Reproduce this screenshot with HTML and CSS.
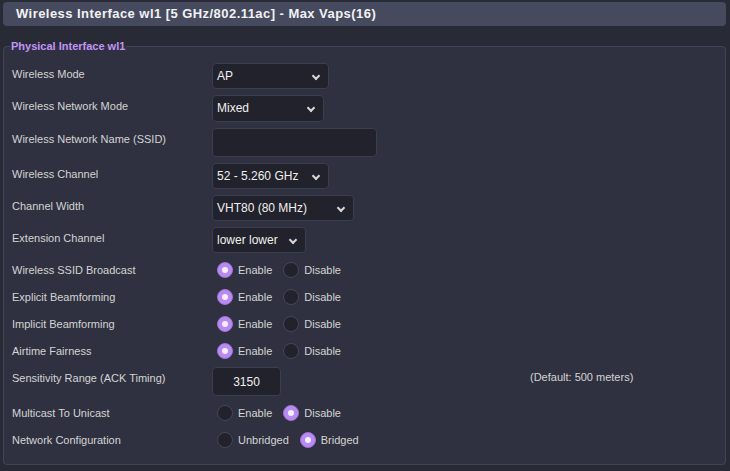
FILE: index.html
```html
<!DOCTYPE html>
<html>
<head>
<meta charset="utf-8">
<link rel="stylesheet" href="styles.css">
</head>
<body>
<div class="page">
  <h2 class="title">Wireless Interface wl1 [5 GHz/802.11ac] - Max Vaps(16)</h2>
  <fieldset class="panel">
    <legend class="legend">Physical Interface wl1</legend>

    <div class="row">
      <div class="label">Wireless Mode</div>
      <div class="select w-117">AP<span class="chev"></span></div>
    </div>
    <div class="row">
      <div class="label">Wireless Network Mode</div>
      <div class="select w-112 h27">Mixed<span class="chev"></span></div>
    </div>
    <div class="row">
      <div class="label">Wireless Network Name (SSID)</div>
      <div class="textbox w-165"></div>
    </div>
    <div class="row">
      <div class="label">Wireless Channel</div>
      <div class="select w-117">52 - 5.260 GHz<span class="chev"></span></div>
    </div>
    <div class="row">
      <div class="label">Channel Width</div>
      <div class="select w-142">VHT80 (80 MHz)<span class="chev"></span></div>
    </div>
    <div class="row">
      <div class="label">Extension Channel</div>
      <div class="select w-94">lower lower<span class="chev"></span></div>
    </div>

    <div class="row radio-row">
      <div class="label">Wireless SSID Broadcast</div>
      <div class="radios">
        <span class="radio on"></span><span class="rtext">Enable</span>
        <span class="radio"></span><span class="rtext">Disable</span>
      </div>
    </div>
    <div class="row radio-row">
      <div class="label">Explicit Beamforming</div>
      <div class="radios">
        <span class="radio on"></span><span class="rtext">Enable</span>
        <span class="radio"></span><span class="rtext">Disable</span>
      </div>
    </div>
    <div class="row radio-row">
      <div class="label">Implicit Beamforming</div>
      <div class="radios">
        <span class="radio on"></span><span class="rtext">Enable</span>
        <span class="radio"></span><span class="rtext">Disable</span>
      </div>
    </div>
    <div class="row radio-row">
      <div class="label">Airtime Fairness</div>
      <div class="radios">
        <span class="radio on"></span><span class="rtext">Enable</span>
        <span class="radio"></span><span class="rtext">Disable</span>
      </div>
    </div>

    <div class="row">
      <div class="label">Sensitivity Range (ACK Timing)</div>
      <div class="textbox w-69 num">3150</div>
      <div class="note">(Default: 500 meters)</div>
    </div>

    <div class="row radio-row">
      <div class="label">Multicast To Unicast</div>
      <div class="radios">
        <span class="radio"></span><span class="rtext">Enable</span>
        <span class="radio on"></span><span class="rtext">Disable</span>
      </div>
    </div>
    <div class="row radio-row">
      <div class="label">Network Configuration</div>
      <div class="radios">
        <span class="radio"></span><span class="rtext">Unbridged</span>
        <span class="radio on"></span><span class="rtext">Bridged</span>
      </div>
    </div>
  </fieldset>
</div>
</body>
</html>
```

FILE: styles.css
```css
html, body {
  margin: 0;
  padding: 0;
  background: #282a36;
}
body {
  font-family: "Liberation Sans", Arial, sans-serif;
  color: #d6d6d6;
  width: 730px;
  height: 471px;
  overflow: hidden;
}
.page {
  padding: 2px 4px 0 3px;
}
.title {
  margin: 0;
  height: 24px;
  line-height: 24px;
  background: #464a5e;
  border-radius: 4px;
  color: #f2f2f2;
  font-size: 13px;
  font-weight: bold;
  letter-spacing: 0.45px;
  padding-left: 13px;
}
.panel {
  margin: 14px 0 0 0;
  padding: 11px 8px 8px 8px;
  border: 1px solid #414456;
  border-radius: 4px;
  background: #2f3140;
  min-width: 0;
}
.legend {
  padding: 0 1px;
  margin-left: -2px;
  color: #c294f5;
  font-size: 11px;
  font-weight: bold;
  line-height: 12px;
}
.row {
  display: flex;
  align-items: flex-start;
  margin-bottom: 6px;
}
.label {
  width: 200px;
  flex: none;
  font-size: 11px;
  line-height: 14px;
  padding-top: 4px;
  color: #d4d4d4;
}
.select {
  position: relative;
  height: 26px;
  box-sizing: border-box;
  border: 1px solid #3b3e4e;
  border-radius: 4px;
  background: #21222c;
  color: #f0f0f0;
  font-size: 12px;
  line-height: 24px;
  padding-left: 4px;
}
.h27 { height: 27px; line-height: 25px; }
.chev {
  position: absolute;
  right: 9px;
  top: 9px;
  width: 4px;
  height: 4px;
  border-right: 2px solid #d8d8d8;
  border-bottom: 2px solid #d8d8d8;
  transform: rotate(45deg);
}
.w-117 { width: 117px; }
.w-112 { width: 112px; }
.w-142 { width: 142px; }
.w-94 { width: 94px; }
.w-165 { width: 165px; }
.w-69 { width: 69px; }
.textbox {
  height: 29px;
  box-sizing: border-box;
  border: 1px solid #3b3e4e;
  border-radius: 4px;
  background: #21222c;
  color: #f0f0f0;
  font-size: 12px;
}
.num {
  text-align: center;
  line-height: 29px;
}
.note {
  margin-left: 249px;
  font-size: 11px;
  line-height: 14px;
  padding-top: 3px;
  color: #d4d4d4;
}
.radio-row {
  height: 21px;
  align-items: center;
}
.radio-row .label {
  padding-top: 0;
}
.radios {
  display: flex;
  align-items: center;
  padding-left: 5px;
}
.radio {
  width: 16px;
  height: 16px;
  box-sizing: border-box;
  border-radius: 50%;
  border: 1px solid #44475a;
  background: #21222c;
  flex: none;
}
.radio.on {
  background: #b98af0;
  border: 1px solid #9d74d6;
  position: relative;
}
.radio.on::after {
  content: "";
  position: absolute;
  left: 4px;
  top: 4px;
  width: 6px;
  height: 6px;
  border-radius: 50%;
  background: #f4f0fa;
}
.rtext {
  font-size: 11px;
  margin: 0 11px 0 5px;
  color: #d4d4d4;
}
```
